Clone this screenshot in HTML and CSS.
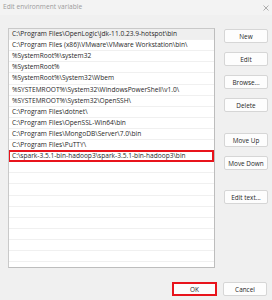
FILE: index.html
```html
<!DOCTYPE html>
<html>
<head>
<meta charset="utf-8">
<link rel="stylesheet" href="styles.css">
</head>
<body>
<div class="dialog">
  <div class="titlebar">
    <span class="title">Edit environment variable</span>
    <svg class="close" width="6" height="6" viewBox="0 0 6 6"><path d="M0.5 0.5L5.5 5.5M5.5 0.5L0.5 5.5" stroke="#9a9a9a" stroke-width="0.8" fill="none"/></svg>
  </div>
  <div class="main">
    <div class="list">
      <div class="row sel">C:\Program Files\OpenLogic\jdk-11.0.23.9-hotspot\bin</div>
      <div class="row">C:\Program Files (x86)\VMware\VMware Workstation\bin\</div>
      <div class="row">%SystemRoot%\system32</div>
      <div class="row">%SystemRoot%</div>
      <div class="row">%SystemRoot%\System32\Wbem</div>
      <div class="row">%SYSTEMROOT%\System32\WindowsPowerShell\v1.0\</div>
      <div class="row">%SYSTEMROOT%\System32\OpenSSH\</div>
      <div class="row">C:\Program Files\dotnet\</div>
      <div class="row">C:\Program Files\OpenSSL-Win64\bin</div>
      <div class="row">C:\Program Files\MongoDB\Server\7.0\bin</div>
      <div class="row">C:\Program Files\PuTTY\</div>
      <div class="row mark">C:\spark-3.5.1-bin-hadoop3\spark-3.5.1-bin-hadoop3\bin</div>
      <div class="row"></div>
      <div class="row"></div>
      <div class="row"></div>
      <div class="row"></div>
      <div class="row"></div>
      <div class="row"></div>
      <div class="row"></div>
      <div class="row"></div>
      <div class="row"></div>
      <div class="row"></div>
    </div>
    <div class="buttons">
      <div class="btn b-new">New</div>
      <div class="btn b-gap">Edit</div>
      <div class="btn b-gap">Browse...</div>
      <div class="btn b-gap">Delete</div>
      <div class="btn b-up">Move Up</div>
      <div class="btn b-gap">Move Down</div>
      <div class="btn b-edit">Edit text...</div>
    </div>
  </div>
  <div class="footer">
    <div class="btn ok">OK</div>
    <div class="btn">Cancel</div>
  </div>
</div>
</body>
</html>
```
FILE: styles.css
```css
html, body {
  margin: 0;
  padding: 0;
  background: #f0f0f0;
}
body {
  width: 272px;
  height: 300px;
  overflow: hidden;
  font-family: "Open Sans", "Noto Sans", sans-serif;
}
.dialog {
  display: flex;
  flex-direction: column;
}
.titlebar {
  height: 15px;
  display: flex;
  align-items: center;
  justify-content: space-between;
  padding: 0 3px 0 3px;
  background: #f3f3f3;
}
.title {
  font-size: 6.6px;
  color: #9b9b9b;
  line-height: 1;
}
.close {
  display: block;
}
.main {
  display: flex;
  margin-top: 13px;
}
.list {
  margin-left: 8px;
  width: 205px;
  height: 238px;
  background: #fff;
  border: 1px solid #c9c9c9;
  border-right-color: #bdbdbd;
  border-bottom-color: #bdbdbd;
  overflow: hidden;
  display: flex;
  flex-direction: column;
}
.row {
  flex: none;
  height: 10.12px;
  border-bottom: 1px solid #f0f0f0;
  font-size: 6.6px;
  line-height: 10.12px;
  padding-left: 3px;
  color: #1f1f1f;
  white-space: nowrap;
  box-sizing: content-box;
}
.row.sel {
  background: #efefef;
}
.row.mark {
  margin-left: -1px;
  margin-right: 0;
  padding-left: 2px;
  border: 2px solid #e8141c;
  height: 8px;
  line-height: 8px;
  margin-top: -1px;
}
.buttons {
  margin-left: 9px;
  width: 44px;
  display: flex;
  flex-direction: column;
}
.btn {
  box-sizing: border-box;
  width: 44px;
  height: 14px;
  background: #fdfdfd;
  border: 1px solid #d6d6d6;
  border-radius: 2px;
  font-size: 6.4px;
  color: #1f1f1f;
  display: flex;
  align-items: center;
  justify-content: center;
  white-space: nowrap;
}
.b-new { margin-top: 1px; }
.b-gap { margin-top: 9px; }
.b-up { margin-top: 21px; }
.b-edit { margin-top: 20px; }
.footer {
  display: flex;
  justify-content: flex-end;
  gap: 6px;
  padding-right: 5px;
  margin-top: 14px;
}
.btn.ok {
  width: 45px;
  border: 2px solid #e8141c;
  border-radius: 0;
}
```
